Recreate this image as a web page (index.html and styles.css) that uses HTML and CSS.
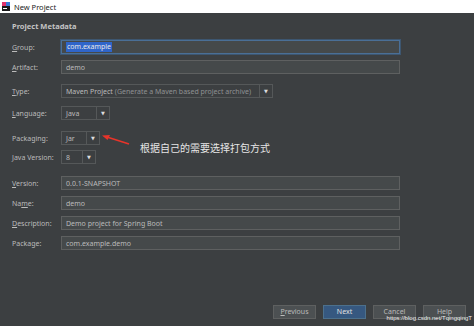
FILE: index.html
```html
<!DOCTYPE html>
<html lang="zh-CN">
<head>
    <meta charset="UTF-8">
    <meta name="viewport" content="width=device-width, initial-scale=1.0">
    <title>New Project</title>
    <link rel="stylesheet" href="styles.css">
</head>
<body>

    <div class="window">
        <!-- Title bar -->
        <div class="titlebar">
            <svg class="app-icon" width="8" height="9" viewBox="0 0 8 9">
                <rect width="8" height="9" fill="#1a1a1a"/>
                <rect x="0" y="0" width="4" height="4" fill="#e0336b"/>
                <rect x="4" y="0" width="4" height="4" fill="#3a7bd5"/>
                <rect x="1" y="6" width="4" height="1" fill="#ffffff"/>
            </svg>
            <span>New Project</span>
        </div>

        <div class="content">
            <div class="section-title">Project Metadata</div>

            <div class="row row-group">
                <label><u>G</u>roup:</label>
                <div class="field field-wide focused"><span class="selected">com.example</span></div>
            </div>
            <div class="row row-artifact">
                <label><u>A</u>rtifact:</label>
                <div class="field field-wide">demo</div>
            </div>
            <div class="row row-type">
                <label><u>T</u>ype:</label>
                <div class="combo combo-type">
                    <span class="combo-text">Maven Project <span class="dim">(Generate a Maven based project archive)</span></span>
                    <span class="combo-arrow">&#9660;</span>
                </div>
            </div>
            <div class="row row-language">
                <label><u>L</u>anguage:</label>
                <div class="combo combo-language">
                    <span class="combo-text">Java</span>
                    <span class="combo-arrow">&#9660;</span>
                </div>
            </div>
            <div class="row row-packaging">
                <label>Packaging:</label>
                <div class="combo combo-packaging">
                    <span class="combo-text">Jar</span>
                    <span class="combo-arrow">&#9660;</span>
                </div>
            </div>
            <div class="row row-java">
                <label><u>J</u>ava Version:</label>
                <div class="combo combo-java">
                    <span class="combo-text">8</span>
                    <span class="combo-arrow">&#9660;</span>
                </div>
            </div>
            <div class="row row-version">
                <label><u>V</u>ersion:</label>
                <div class="field field-wide">0.0.1-SNAPSHOT</div>
            </div>
            <div class="row row-next">
                <label>Na<u>m</u>e:</label>
                <div class="field field-wide">demo</div>
            </div>
            <div class="row row-next">
                <label><u>D</u>escription:</label>
                <div class="field field-wide">Demo project for Spring Boot</div>
            </div>
            <div class="row row-next">
                <label>Package:</label>
                <div class="field field-wide">com.example.demo</div>
            </div>
        </div>

        <div class="buttons">
            <button class="btn"><u>P</u>revious</button>
            <button class="btn btn-primary">Next</button>
            <button class="btn">Cancel</button>
            <button class="btn">Help</button>
        </div>

        <!-- Annotation over the dialog -->
        <svg class="note-arrow" width="30" height="12" viewBox="0 0 30 12">
            <line x1="28" y1="10" x2="6" y2="3" stroke="#e8342a" stroke-width="1.6"/>
            <polygon points="1,1.5 9,1 6.5,6" fill="#e8342a"/>
        </svg>
        <div class="note-text">根据自己的需要选择打包方式</div>

        <div class="watermark">https://blog.csdn.net/TqingqingT</div>
    </div>

</body>
</html>
```

FILE: styles.css
```css
/* Basic styling */
body {
    margin: 0;
    padding: 0;
    background-color: #3c3f41;
    font-family: "Noto Sans", "DejaVu Sans", sans-serif;
}
.window {
    position: relative;
    width: 474px;
    height: 326px;
    background-color: #3c3f41;
    color: #bbbbbb;
    font-size: 7px;
    display: flex;
    flex-direction: column;
    overflow: hidden;
}
.titlebar {
    height: 13px;
    background-color: #ffffff;
    color: #222222;
    display: flex;
    align-items: center;
    gap: 4px;
    padding-left: 2px;
    font-size: 7.5px;
}
.content {
    padding: 0 12px;
    flex-grow: 1;
}
.section-title {
    font-weight: bold;
    font-size: 7.5px;
    margin-top: 8px;
    height: 11px;
    line-height: 11px;
    color: #c4c4c4;
}
.row {
    display: flex;
    align-items: center;
    height: 14px;
}
.row label {
    width: 49px;
    flex-shrink: 0;
}
.row-group { margin-top: 8px; }
.row-artifact { margin-top: 6px; }
.row-type { margin-top: 10px; }
.row-language { margin-top: 8px; }
.row-packaging { margin-top: 11px; }
.row-java { margin-top: 5px; }
.row-version { margin-top: 12px; }
.row-next { margin-top: 6px; }

.field {
    box-sizing: border-box;
    height: 14px;
    background-color: #45494a;
    border: 1px solid #5e6060;
    padding-left: 4px;
    display: flex;
    align-items: center;
    color: #bbbbbb;
}
.field-wide {
    width: 339px;
}
.focused {
    border-color: #4a6f96;
    box-shadow: 0 0 0 1px #3d5670;
}
.selected {
    background-color: #2f65ca;
    color: #e8e8e8;
    padding: 0 1px;
    line-height: 10px;
}
.combo {
    box-sizing: border-box;
    height: 14px;
    display: flex;
    border: 1px solid #555859;
    background-color: #3c3f41;
}
.combo-text {
    flex-grow: 1;
    padding-left: 4px;
    display: flex;
    align-items: center;
    white-space: nowrap;
    overflow: hidden;
}
.dim {
    color: #8f9193;
    margin-left: 2px;
}
.combo-arrow {
    width: 12px;
    border-left: 1px solid #555859;
    display: flex;
    align-items: center;
    justify-content: center;
    font-size: 5px;
    color: #dddddd;
}
.combo-type { width: 212px; }
.combo-language { width: 49px; }
.combo-packaging { width: 39px; }
.combo-java { width: 35px; }

.buttons {
    display: flex;
    justify-content: flex-end;
    gap: 7px;
    padding-right: 8px;
    margin-bottom: 7px;
}
.btn {
    width: 43px;
    height: 14px;
    padding: 0 0 2px;
    border: 1px solid #5e6060;
    background-color: #4c5052;
    color: #bbbbbb;
    font-family: "Noto Sans", "DejaVu Sans", sans-serif;
    font-size: 7px;
}
.btn-primary {
    background-color: #365880;
    border-color: #4c708c;
    color: #e0e0e0;
}
.note-arrow {
    position: absolute;
    left: 101px;
    top: 134px;
}
.note-text {
    position: absolute;
    left: 140px;
    top: 140px;
    font-family: "Noto Sans CJK SC", sans-serif;
    font-size: 10px;
    color: #e6e6e6;
}
.watermark {
    position: absolute;
    right: 2px;
    bottom: 5px;
    font-family: "Liberation Sans", sans-serif;
    font-size: 6px;
    line-height: 6px;
    color: #f0f0f0;
}
```
